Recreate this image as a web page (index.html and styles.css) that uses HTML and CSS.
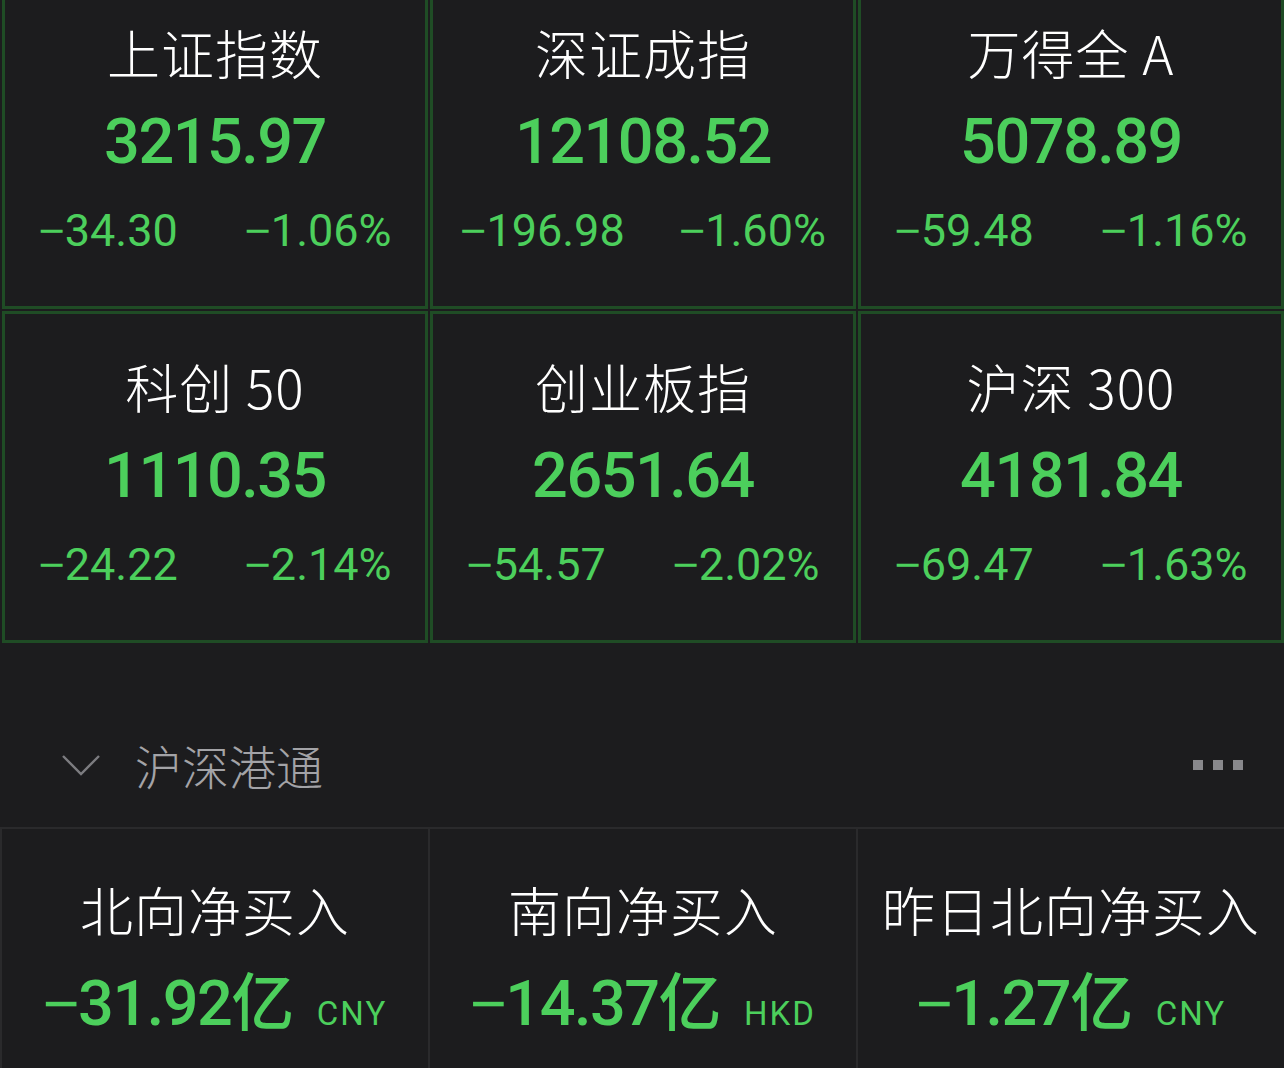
FILE: index.html
```html
<!DOCTYPE html>
<html lang="zh-CN">
<head>
<meta charset="utf-8">
<title>行情</title>
<link rel="stylesheet" href="styles.css">
</head>
<body>
<div class="page">
  <div class="indices">
    <div class="cell">
      <div class="title">上证指数</div>
      <div class="value">3215.97</div>
      <div class="changes"><span><span class="m">−</span>34.30</span><span><span class="m">−</span>1.06%</span></div>
    </div>
    <div class="cell">
      <div class="title">深证成指</div>
      <div class="value">12108.52</div>
      <div class="changes"><span><span class="m">−</span>196.98</span><span><span class="m">−</span>1.60%</span></div>
    </div>
    <div class="cell">
      <div class="title">万得全 A</div>
      <div class="value">5078.89</div>
      <div class="changes"><span><span class="m">−</span>59.48</span><span><span class="m">−</span>1.16%</span></div>
    </div>
    <div class="cell">
      <div class="title">科创 50</div>
      <div class="value">1110.35</div>
      <div class="changes"><span><span class="m">−</span>24.22</span><span><span class="m">−</span>2.14%</span></div>
    </div>
    <div class="cell">
      <div class="title">创业板指</div>
      <div class="value">2651.64</div>
      <div class="changes"><span><span class="m">−</span>54.57</span><span><span class="m">−</span>2.02%</span></div>
    </div>
    <div class="cell">
      <div class="title">沪深 300</div>
      <div class="value">4181.84</div>
      <div class="changes"><span><span class="m">−</span>69.47</span><span><span class="m">−</span>1.63%</span></div>
    </div>
  </div>

  <div class="section-head">
    <svg class="chevron" width="40" height="22" viewBox="0 0 40 22"><polyline points="2,2 20,20 38,2" fill="none" stroke="#7c7c80" stroke-width="2.4"/></svg>
    <span class="section-title">沪深港通</span>
    <div class="more"><i></i><i></i><i></i></div>
  </div>

  <div class="flows">
    <div class="flow">
      <div class="title">北向净买入</div>
      <div class="flow-value"><span class="amount"><span class="m">−</span>31.92亿</span><span class="unit">CNY</span></div>
    </div>
    <div class="flow">
      <div class="title">南向净买入</div>
      <div class="flow-value"><span class="amount"><span class="m">−</span>14.37亿</span><span class="unit">HKD</span></div>
    </div>
    <div class="flow">
      <div class="title">昨日北向净买入</div>
      <div class="flow-value"><span class="amount"><span class="m">−</span>1.27亿</span><span class="unit">CNY</span></div>
    </div>
  </div>
</div>
</body>
</html>
```

FILE: styles.css
```css
html, body {
  margin: 0;
  padding: 0;
  background: #1c1c1e;
  overflow: hidden;
}

body {
  width: 1284px;
  height: 1068px;
  font-family: Roboto, "Liberation Sans", "Noto Sans CJK SC", sans-serif;
  color: #ffffff;
}

.page {
  margin-top: -23px;
}

.indices {
  display: grid;
  grid-template-columns: repeat(3, 426px);
  grid-auto-rows: 332px;
  gap: 2px;
  padding-left: 2px;
}

.cell {
  box-sizing: border-box;
  border: 3px solid #1f4c25;
  padding-top: 42px;
  display: flex;
  flex-direction: column;
  align-items: center;
}

.title {
  font-family: "Noto Sans CJK SC", sans-serif;
  font-size: 53px;
  font-weight: 300;
  line-height: 60px;
  letter-spacing: 1px;
  color: #ffffff;
  white-space: nowrap;
}

.m {
  font-family: "Liberation Sans", sans-serif;
  font-weight: 400;
}

.value {
  margin-top: 25px;
  font-size: 63px;
  line-height: 70px;
  font-weight: 500;
  letter-spacing: -1.5px;
  color: #4ccf5c;
}

.changes {
  margin-top: 29px;
  align-self: stretch;
  display: flex;
  justify-content: space-around;
  font-size: 45px;
  line-height: 50px;
  color: #4ccf5c;
}

.section-head {
  margin-top: 92px;
  height: 60px;
  display: flex;
  align-items: center;
  padding: 0 41px 0 61px;
  margin-bottom: 32px;
}

.chevron {
  display: block;
  margin-right: 34px;
}

.section-title {
  font-family: "Noto Sans CJK SC", sans-serif;
  font-size: 47px;
  font-weight: 300;
  line-height: 60px;
  color: #a3a3a7;
}

.more {
  margin-left: auto;
  display: flex;
  gap: 10px;
}

.more i {
  display: block;
  width: 10px;
  height: 10px;
  background: #88888c;
}

.flows {
  border-top: 2px solid #2a2a2c;
  background: #2a2a2c;
  display: grid;
  grid-template-columns: repeat(3, 426px);
  gap: 2px;
  padding-left: 2px;
  height: 300px;
}

.flow {
  background: #1c1c1e;
  padding-top: 50px;
  display: flex;
  flex-direction: column;
  align-items: center;
}

.flow-value {
  margin-top: 29px;
  display: flex;
  align-items: baseline;
  line-height: 70px;
  color: #4ccf5c;
}

.amount {
  font-size: 63px;
  font-weight: 500;
  letter-spacing: -1.5px;
}

.unit {
  margin-left: 24px;
  font-size: 33px;
  letter-spacing: 2px;
}
```
